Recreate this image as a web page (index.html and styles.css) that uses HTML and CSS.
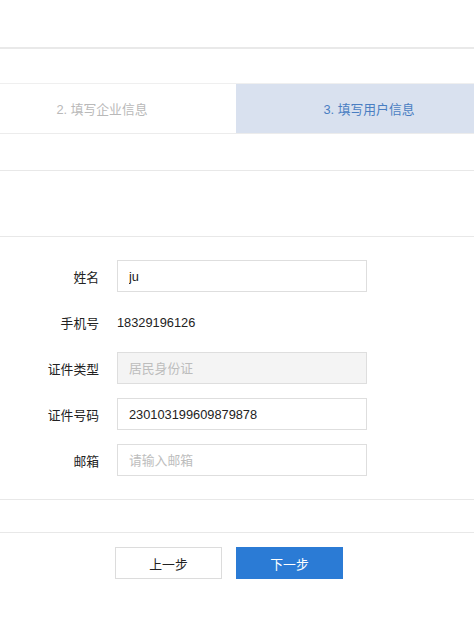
FILE: index.html
```html
<!DOCTYPE html>
<html lang="zh-CN">
<head>
<meta charset="utf-8">
<title>填写用户信息</title>
<link rel="stylesheet" href="styles.css">
</head>
<body>
<div class="page">
  <div class="topbar"></div>
  <div class="steps">
    <div class="step">2. 填写企业信息</div>
    <div class="step active">3. 填写用户信息</div>
  </div>
  <div class="band"></div>
  <form class="form">
    <div class="row">
      <label class="label">姓名</label>
      <input class="input" type="text" value="ju">
    </div>
    <div class="row">
      <span class="label">手机号</span>
      <span class="text">18329196126</span>
    </div>
    <div class="row">
      <label class="label">证件类型</label>
      <input class="input disabled" type="text" placeholder="居民身份证" disabled>
    </div>
    <div class="row">
      <label class="label">证件号码</label>
      <input class="input" type="text" value="230103199609879878">
    </div>
    <div class="row">
      <label class="label">邮箱</label>
      <input class="input" type="text" placeholder="请输入邮箱">
    </div>
  </form>
  <div class="band2"></div>
  <div class="actions">
    <button class="btn" type="button">上一步</button>
    <button class="btn primary" type="button">下一步</button>
  </div>
</div>
</body>
</html>
```
FILE: styles.css
```css
* { box-sizing: border-box; }
html, body { margin: 0; padding: 0; background: #fff; }
body {
  font-family: "Liberation Sans", "Noto Sans CJK SC", sans-serif;
  font-size: 12.8px;
  color: #222;
}
.page { width: 474px; }
.topbar {
  height: 49px;
  border-bottom: 2px solid #e9e9e9;
}
.steps {
  margin-top: 34px;
  display: grid;
  grid-template-columns: 236px 1fr;
  border-top: 1px solid #efefef;
  border-bottom: 1px solid #ececec;
  height: 51px;
}
.step {
  display: flex;
  align-items: center;
  justify-content: center;
  color: #b9b9b9;
  padding-right: 32px;
}
.step.active {
  background: #d9e1ef;
  color: #4a7ec2;
  padding-right: 0;
  padding-left: 28px;
}
.band {
  margin-top: 36px;
  height: 67px;
  border-top: 1px solid #e8e8e8;
  border-bottom: 1px solid #e8e8e8;
}
.form {
  margin: 0;
  padding-top: 23px;
  display: flex;
  flex-direction: column;
  gap: 14px;
}
.row {
  display: flex;
  align-items: center;
  height: 32px;
  gap: 18px;
}
.label {
  width: 99px;
  text-align: right;
  color: #222;
}
.text { color: #222; }
.input {
  width: 250px;
  height: 32px;
  border: 1px solid #dedede;
  border-radius: 0;
  padding: 0 11px;
  font: inherit;
  color: #222;
  background: #fff;
  outline: none;
}
.input::placeholder { color: #bdbdbd; }
.input.disabled { background: #f4f4f4; }
.band2 {
  margin-top: 23px;
  height: 34px;
  border-top: 1px solid #e8e8e8;
  border-bottom: 1px solid #e8e8e8;
}
.actions {
  display: flex;
  justify-content: center;
  gap: 14px;
  padding: 14px 16px 0 0;
}
.btn {
  width: 107px;
  height: 32px;
  border: 1px solid #dcdcdc;
  background: #fff;
  color: #222;
  font: inherit;
  border-radius: 0;
  padding: 0;
}
.btn.primary {
  background: #2b7bd5;
  border-color: #2b7bd5;
  color: #fff;
}
```
